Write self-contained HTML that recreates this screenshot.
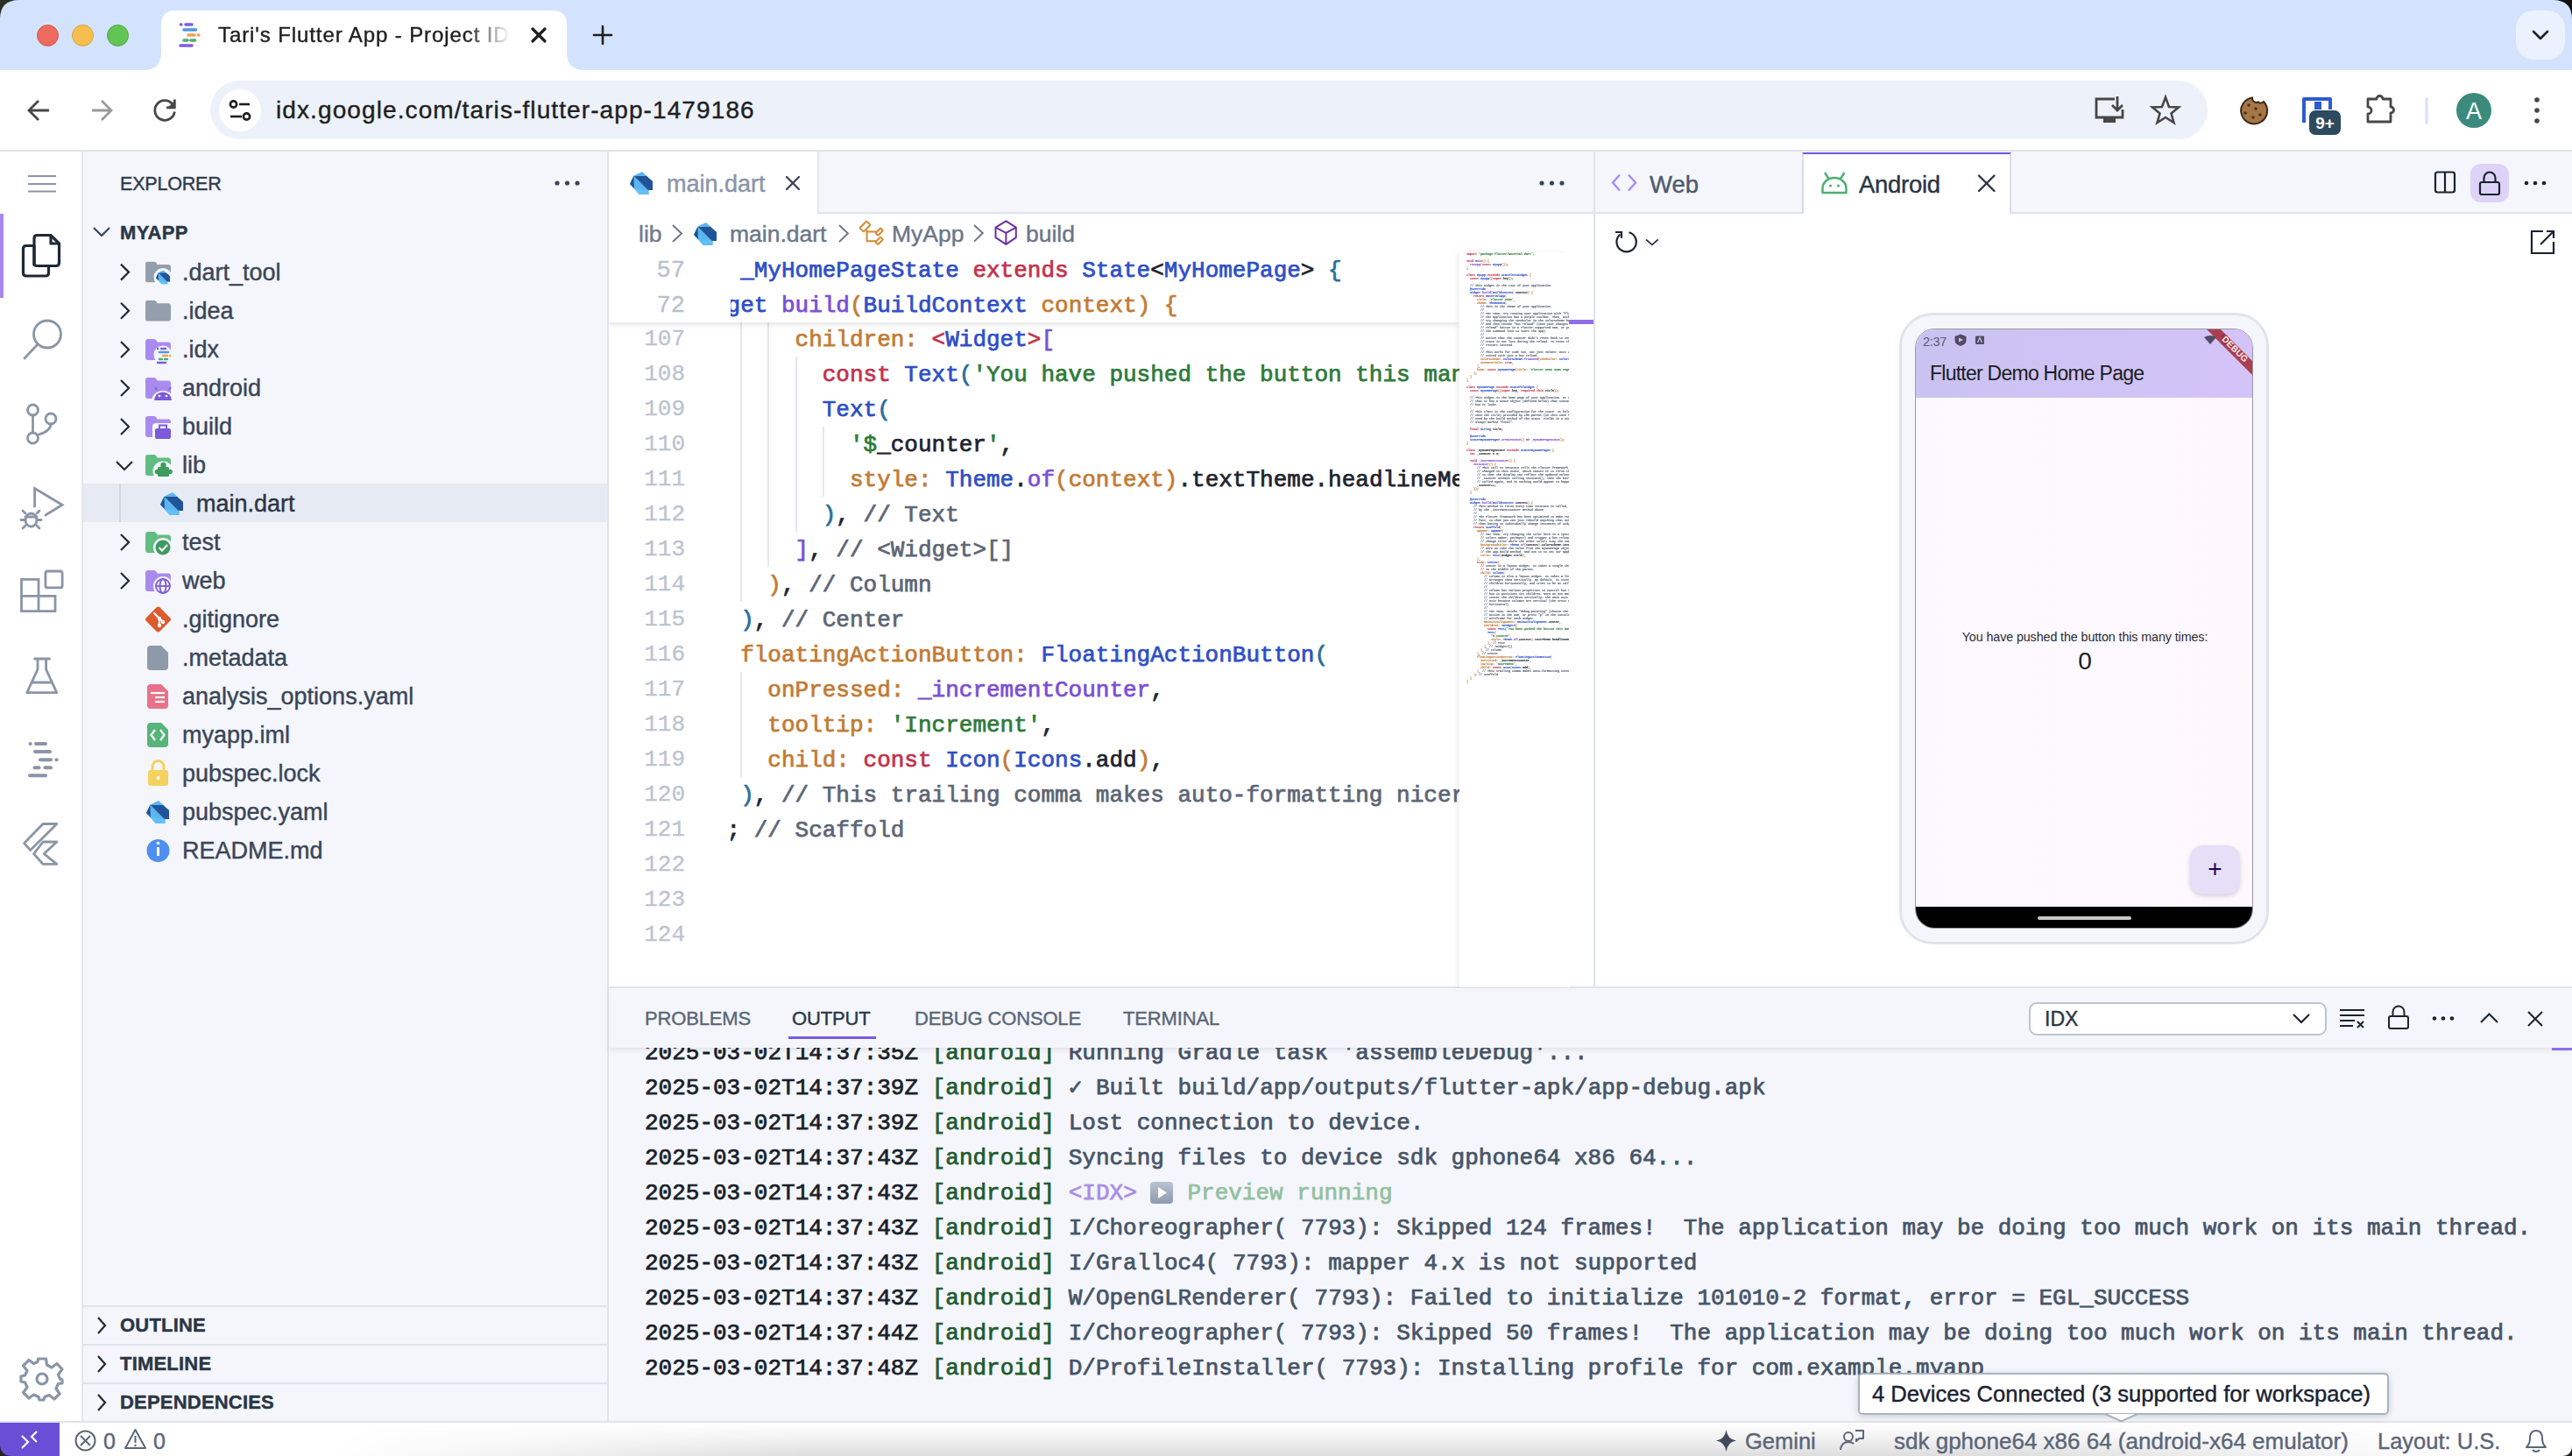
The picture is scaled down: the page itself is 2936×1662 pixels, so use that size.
<!DOCTYPE html>
<html><head><meta charset="utf-8">
<style>
*{box-sizing:border-box;margin:0;padding:0}
html,body{width:2936px;height:1662px;overflow:hidden;background:#fff;font-family:"Liberation Sans",sans-serif}
body{-webkit-text-stroke:0.4px currentColor}
.a{position:absolute}
.mono{font-family:"Liberation Mono",monospace}
svg{position:absolute;overflow:visible}
/* chrome */
#tabstrip{left:0;top:0;width:2936px;height:80px;background:#d3e3fd}
#toolbar{left:0;top:80px;width:2936px;height:93px;background:#fff;border-radius:20px 20px 0 0;border-bottom:2px solid #e1e3e6}
.tl{width:25px;height:25px;border-radius:50%;top:28px}
#ide{left:0;top:173px;width:2936px;height:1489px;background:#fff}
#actbar{left:0;top:173px;width:95px;height:1449px;background:#fff;border-right:2px solid #e2e6ec}
#sidebar{left:95px;top:173px;width:600px;height:1449px;background:#f4f6fb;border-right:2px solid #dfe3ea}
.row{position:absolute;left:95px;width:598px;height:44px;font-size:27px;color:#3a4557;line-height:44px;white-space:pre}
#edtabs{left:695px;top:173px;width:1124px;height:71px;background:#f4f6fb;border-bottom:2px solid #dfe3ea}
#editor{left:695px;top:244px;width:1124px;height:883px;background:#fff}
#rtabs{left:1819px;top:173px;width:1117px;height:71px;background:#f4f6fb;border-bottom:2px solid #dfe3ea;border-left:2px solid #dfe3ea}
#preview{left:1819px;top:244px;width:1117px;height:883px;background:#fff;border-left:2px solid #dfe3ea}
#panel{left:695px;top:1126px;width:2241px;height:496px;background:#f4f6fb;border-top:2px solid #dfe3ea}
#status{left:0;top:1622px;width:2936px;height:40px;background:#f4f6fb;border-top:2px solid #dfe3ea}
.code{position:absolute;left:0;height:40px;line-height:40px;font-size:26px;white-space:pre;font-family:"Liberation Mono",monospace;color:#1e2430;-webkit-text-stroke:0.75px currentColor}
.ln{position:absolute;width:60px;text-align:right;height:40px;line-height:40px;font-size:26px;font-family:"Liberation Mono",monospace;color:#bcc3ce;-webkit-text-stroke:0.3px currentColor}
.k{color:#c2334d}.t{color:#2e4fc7}.f{color:#7b4fd6}.p{color:#c27b35}.s{color:#2f7a3b}.c{color:#5d6675}.b1{color:#2a6d9c}.b2{color:#c27b35}.b3{color:#7b4fd6}
.con{position:absolute;left:736px;height:40px;line-height:40px;font-size:26px;white-space:pre;font-family:"Liberation Mono",monospace;color:#475467;-webkit-text-stroke:0.75px currentColor}
.ts{color:#1a1f29}.an{color:#1f5a2f}
</style></head><body>
<div id="tabstrip" class="a"></div>
<div id="toolbar" class="a"></div>
<div class="a tl" style="left:42px;background:#ed6a5e;border:1px solid #d5574b"></div>
<div class="a tl" style="left:82px;background:#f5bf4f;border:1px solid #d9a43c"></div>
<div class="a tl" style="left:122px;background:#61c554;border:1px solid #4da83f"></div>


<svg width="2936" height="173" style="left:0;top:0">
 <path d="M0 0 L22 0 Q0 0 0 22 Z" fill="#2b2f26"/>
 <path d="M2936 0 L2914 0 Q2936 0 2936 22 Z" fill="#111"/>
 <path d="M163 80 Q184 80 184 60 L184 28 Q184 12 200 12 L631 12 Q647 12 647 28 L647 60 Q647 80 668 80 Z" fill="#fff"/>
 <!-- favicon -->
 <g stroke-linecap="round" stroke-width="3.6">
  <line x1="206.5" y1="28" x2="206.8" y2="28" stroke="#7b5de0"/>
  <line x1="212" y1="28" x2="219" y2="28" stroke="#7b5de0"/>
  <line x1="210" y1="34" x2="223.5" y2="34" stroke="#4a97e6"/>
  <line x1="215" y1="40" x2="222" y2="40" stroke="#f0a04b"/>
  <line x1="226.5" y1="40" x2="226.8" y2="40" stroke="#f0a04b"/>
  <line x1="210" y1="46" x2="214" y2="46" stroke="#4caf6e"/>
  <line x1="218" y1="46" x2="222.5" y2="46" stroke="#4caf6e"/>
  <line x1="206" y1="52" x2="219" y2="52" stroke="#7b5de0"/>
 </g>
 <!-- tab close -->
 <g stroke="#1f1f1f" stroke-width="3.2" stroke-linecap="round">
  <line x1="608" y1="33" x2="622" y2="47"/><line x1="622" y1="33" x2="608" y2="47"/>
 </g>
 <!-- new tab + -->
 <g stroke="#1f1f1f" stroke-width="2.6" stroke-linecap="round">
  <line x1="678" y1="40" x2="698" y2="40"/><line x1="688" y1="30" x2="688" y2="50"/>
 </g>
 <!-- chevron btn -->
 <rect x="2872" y="12" width="56" height="56" rx="20" fill="#ebf1fd"/>
 <path d="M2892 36 L2900 44 L2908 36" fill="none" stroke="#1f1f1f" stroke-width="2.6" stroke-linecap="round" stroke-linejoin="round"/>
 <!-- toolbar -->
 <g fill="none" stroke="#474747" stroke-width="2.8" stroke-linecap="butt" stroke-linejoin="miter">
  <path d="M56 126 L33 126 M44 115 L33 126 L44 137"/>
 </g>
 <g fill="none" stroke="#9a9a9a" stroke-width="2.8">
  <path d="M105 126 L127 126 M116 115 L127 126 L116 137"/>
 </g>
 <g fill="none" stroke="#474747" stroke-width="2.8">
  <path d="M199.3 127.5 A11.3 11.3 0 1 1 197 119"/>
  <path d="M190 122.8 L199.3 122.8 L199.3 113.5" stroke-width="2.8"/>
  <path d="M192 122.8 L199.3 122.8 L199.3 115.5 Z" fill="#474747" stroke-width="1"/>
 </g>
 <rect x="240" y="92" width="2280" height="67" rx="33.5" fill="#edf2fa"/>
 <circle cx="274" cy="126" r="24" fill="#fff"/>
 <g fill="none" stroke="#1f1f1f" stroke-width="2.6">
  <circle cx="266.5" cy="119" r="3.6"/><line x1="273" y1="119" x2="285" y2="119"/>
  <circle cx="281.5" cy="133" r="3.6"/><line x1="263" y1="133" x2="276" y2="133"/>
 </g>
 <!-- install -->
 <g fill="none" stroke="#474747" stroke-width="2.8">
  <path d="M2414 113 L2393 113 L2393 134 L2423 134 L2423 125"/>
  <path d="M2417 110 L2417 126 M2411 120 L2417 126 L2423 120"/>
 </g>
 <rect x="2401" y="135" width="14" height="5" fill="#474747"/>
 <path d="M2472 111 L2476 122 L2487 122.5 L2478.5 129.5 L2481.5 140 L2472 134 L2462.5 140 L2465.5 129.5 L2457 122.5 L2468 122 Z" fill="none" stroke="#474747" stroke-width="2.6" stroke-linejoin="miter"/>
 <!-- cookie -->
 <path d="M2584 116 A15 15 0 1 1 2571 111.5 A5 5 0 0 0 2578 116.5 A4 4 0 0 0 2584 116 Z" fill="#a67645" stroke="#3d2a18" stroke-width="2"/>
 <g fill="#4a3220"><circle cx="2567" cy="120" r="1.8"/><circle cx="2575" cy="124" r="1.8"/><circle cx="2563" cy="129" r="1.8"/><circle cx="2572" cy="134" r="1.8"/><circle cx="2580" cy="131" r="1.8"/></g>
 <!-- ext badge -->
 <path d="M2630 140 L2630 113 L2660 113 L2660 125" fill="none" stroke="#2d5bd6" stroke-width="4" stroke-linejoin="round"/>
 <rect x="2642" y="116" width="8" height="9" fill="#2d5bd6"/>
 <rect x="2636" y="126" width="36" height="28" rx="7" fill="#2d4a5e"/>
 <text x="2654" y="147" font-family="Liberation Sans" font-weight="bold" font-size="19" fill="#fff" text-anchor="middle">9+</text>
 <!-- puzzle -->
 <path d="M2703 113 L2713 113 A3.5 3.5 0 0 1 2720 113 L2729 113 L2729 122 A3.5 3.5 0 0 1 2729 129 L2729 139 L2703 139 L2703 130 A4 4 0 0 0 2703 122 Z" fill="none" stroke="#474747" stroke-width="2.8" stroke-linejoin="round"/>
 <rect x="2768.5" y="111" width="3" height="31" rx="1.5" fill="#d3e3fd"/>
 <circle cx="2824" cy="126" r="20" fill="#3b8a7c"/>
 <text x="2824" y="136" font-family="Liberation Sans" font-size="27" fill="#fff" text-anchor="middle">A</text>
 <g fill="#474747"><circle cx="2896" cy="114" r="2.8"/><circle cx="2896" cy="126" r="2.8"/><circle cx="2896" cy="138" r="2.8"/></g>
</svg>
<div class="a" style="left:249px;top:22px;height:36px;line-height:36px;font-size:24px;color:#1f1f1f;white-space:pre;letter-spacing:0.9px;width:334px;overflow:hidden;-webkit-mask-image:linear-gradient(90deg,#000 85%,transparent)">Tari's Flutter App - Project IDX</div>
<div class="a" style="left:315px;top:106px;height:40px;line-height:40px;font-size:28px;color:#1f1f1f;white-space:pre;letter-spacing:1.1px">idx.google.com/taris-flutter-app-1479186</div>

<div id="actbar" class="a"></div>
<div id="sidebar" class="a"></div>

<svg width="0" height="0" style="position:absolute">
<defs>
 <symbol id="dart" viewBox="0 0 26 26">
  <polygon points="4.5,4.5 14,0 19.5,4.9 26,11 26,21 21.5,21 21.5,26 10.7,26 0,14" fill="#5db5ee"/>
  <polygon points="4.9,4.9 19,4.9 26,11 26,21 20.8,21" fill="#215398"/>
  <polygon points="4.5,4.5 0,14 4.9,19" fill="#215398"/>
  <polygon points="4.9,19 20.8,21 21.5,21 21.5,26 10.7,26" fill="#66c2f7" opacity=".8"/>
 </symbol>
 <symbol id="folder" viewBox="0 0 29 24">
  <path d="M0 3 Q0 0 3 0 L10 0 Q11.5 0 12.5 1.5 L13.5 3.5 L26 3.5 Q29 3.5 29 6.5 L29 21 Q29 24 26 24 L3 24 Q0 24 0 21 Z"/>
 </symbol>
</defs></svg>

<svg width="95" height="1450" style="left:0;top:173px">
 <g transform="translate(0,-173)">
 <g stroke="#8a95a6" stroke-width="2" fill="none">
  <line x1="32" y1="201" x2="64" y2="201"/><line x1="32" y1="210" x2="64" y2="210"/><line x1="32" y1="218.5" x2="64" y2="218.5"/>
 </g>
 <rect x="0" y="244" width="4" height="96" fill="#a687f2"/>
 <g stroke="#1f2937" stroke-width="3.2" fill="none" stroke-linejoin="round">
  <path d="M39 303 L39 272 Q39 268.5 42.5 268.5 L58 268.5 L67.5 278 L67.5 300 Q67.5 303.5 64 303.5 L55.5 303.5"/>
  <path d="M58 268.5 L58 278 L67.5 278"/>
  <path d="M39 280.5 L30 280.5 Q26.5 280.5 26.5 284 L26.5 311.5 Q26.5 315 30 315 L52 315 Q55.5 315 55.5 311.5 L55.5 303.5 L42 303.5 Q39 303.5 39 300.5 Z"/>
 </g>
 <g stroke="#8a95a6" stroke-width="2.8" fill="none" stroke-linecap="round">
  <circle cx="54" cy="381.5" r="15.5"/><line x1="43" y1="393" x2="28" y2="409"/>
  <circle cx="37.5" cy="468" r="6"/><circle cx="37.5" cy="500" r="6"/><circle cx="58" cy="478" r="6"/>
  <line x1="37.5" y1="474" x2="37.5" y2="494"/><path d="M58 484 Q58 492 44 496"/>
  <path d="M39.6 578 L39.6 557.5 L71 576.3 L52 588"/>
  <ellipse cx="35.5" cy="593.5" rx="6.5" ry="7.5"/><path d="M29 586 L26 583 M42 586 L45 583 M24 593.5 L29 593.5 M42 593.5 L47 593.5 M29 600 L26 603 M42 600 L45 603 M29 590 L42 590"/>
  <path d="M24.5 661.4 L44 661.4 L44 680.3 L63 680.3 L63 697.7 L24.5 697.7 Z M24.5 680.3 L44 680.3 L44 697.7"/>
  <rect x="51.9" y="652" width="19.2" height="18.9" rx="2.5"/>
  <path d="M39.6 752 L56.6 752 M43 752 L43 764 L30.8 790.7 L64.8 790.7 L52.6 764 L52.6 752 M36 779 L59.5 779" stroke-linejoin="round"/>
  <path d="M49 940.5 L64.8 940.5 L34.6 970.4 L27.6 962.5 Z" stroke-linejoin="round" stroke-width="2.8"/>
  <path d="M49 961 L64.8 961 L50.3 974.6 L64.8 986.3 L49 986.3 L38.6 974.6 Z" stroke-linejoin="round" stroke-width="2.8"/>
 </g>
 <g stroke="#8a95a6" stroke-width="4" stroke-linecap="round">
  <line x1="34.5" y1="849" x2="34.6" y2="849"/><line x1="41" y1="849" x2="52" y2="849"/>
  <line x1="40" y1="858" x2="57" y2="858"/>
  <line x1="46" y1="867.3" x2="58" y2="867.3"/><line x1="64.5" y1="867.3" x2="64.6" y2="867.3"/>
  <line x1="39.5" y1="876.2" x2="44.5" y2="876.2"/><line x1="51.5" y1="876.2" x2="58" y2="876.2"/>
  <line x1="34" y1="885.3" x2="52" y2="885.3"/>
 </g>
 <g transform="translate(48,1574)" fill="none" stroke="#8a95a6" stroke-width="3.2">
  <path d="M-4.5 -23 L4.5 -23 L5.5 -16 L11 -13 L17 -17.5 L23 -11 L18.5 -5 L20.5 0 L23 1 L23 5 L18.5 5.5 L16 11 L20 17 L14 23 L8 18.5 L3 20.5 L2 24 L-3 24 L-4 20.5 L-9.5 18 L-15 22 L-21.5 15.5 L-17 9.5 L-19.5 4 L-24 3 L-24 -3 L-19.5 -4 L-17 -9.5 L-21.5 -15 L-15 -21.5 L-9.5 -17.5 L-5 -19.5 Z" stroke-linejoin="round"/>
  <circle r="6"/>
 </g>
 </g>
</svg>
<div class="a" style="left:95px;top:552px;width:598px;height:44px;background:#e6eaf2"></div>
<div class="a" style="left:136px;top:552px;width:2px;height:44px;background:#d3d8e0"></div>
<div class="a" style="left:137px;top:194px;height:32px;line-height:32px;font-size:21.5px;color:#2f3a4c;letter-spacing:-0.2px">EXPLORER</div>
<div class="a" style="left:137px;top:250px;height:32px;line-height:32px;font-size:22px;font-weight:bold;color:#2b3545;letter-spacing:0.3px">MYAPP</div>
<div class="row" style="top:288.6px;padding-left:113px">.dart_tool</div>
<div class="row" style="top:332.8px;padding-left:113px">.idea</div>
<div class="row" style="top:377px;padding-left:113px">.idx</div>
<div class="row" style="top:421px;padding-left:113px">android</div>
<div class="row" style="top:465px;padding-left:113px">build</div>
<div class="row" style="top:509px;padding-left:113px">lib</div>
<div class="row" style="top:597px;padding-left:113px">test</div>
<div class="row" style="top:641px;padding-left:113px">web</div>
<div class="row" style="top:553px;padding-left:129px;color:#2b3545">main.dart</div>
<div class="row" style="top:685px;padding-left:113px">.gitignore</div>
<div class="row" style="top:729px;padding-left:113px">.metadata</div>
<div class="row" style="top:773px;padding-left:113px">analysis_options.yaml</div>
<div class="row" style="top:817px;padding-left:113px">myapp.iml</div>
<div class="row" style="top:861px;padding-left:113px">pubspec.lock</div>
<div class="row" style="top:905px;padding-left:113px">pubspec.yaml</div>
<div class="row" style="top:949px;padding-left:113px">README.md</div>
<div class="a" style="left:95px;top:1490px;width:598px;height:2px;background:#dfe3ea"></div>
<div class="a" style="left:95px;top:1534px;width:598px;height:2px;background:#dfe3ea"></div>
<div class="a" style="left:95px;top:1578px;width:598px;height:2px;background:#dfe3ea"></div>
<div class="a" style="left:137px;top:1497px;height:32px;line-height:32px;font-size:22px;font-weight:bold;color:#2b3545;letter-spacing:0.2px">OUTLINE</div>
<div class="a" style="left:137px;top:1541px;height:32px;line-height:32px;font-size:22px;font-weight:bold;color:#2b3545;letter-spacing:0.2px">TIMELINE</div>
<div class="a" style="left:137px;top:1585px;height:32px;line-height:32px;font-size:22px;font-weight:bold;color:#2b3545;letter-spacing:0.2px">DEPENDENCIES</div>
<svg width="700" height="1662" style="left:0;top:0">
<g fill="#3a4557"><circle cx="636" cy="209" r="2.6"/><circle cx="647.5" cy="209" r="2.6"/><circle cx="659" cy="209" r="2.6"/></g>
<path d="M107 260 L116 269 L125 260" fill="none" stroke="#3a4557" stroke-width="2.2"/>
<path d="M138 301.6 L147 310.6 L138 319.6" fill="none" stroke="#1f2937" stroke-width="2.2"/>
<use href="#folder" x="166" y="298.6" width="29" height="24" fill="#949eac"/>
<circle cx="186" cy="316.6" r="10.5" fill="#f4f6fb"/><use href="#dart" x="178" y="308.6" width="16" height="16"/>
<path d="M138 345.8 L147 354.8 L138 363.8" fill="none" stroke="#1f2937" stroke-width="2.2"/>
<use href="#folder" x="166" y="342.8" width="29" height="24" fill="#949eac"/>
<path d="M138 390 L147 399 L138 408" fill="none" stroke="#1f2937" stroke-width="2.2"/>
<use href="#folder" x="166" y="387" width="29" height="24" fill="#a98bf0"/>
<circle cx="186" cy="405" r="10.5" fill="#f4f6fb"/>
<g stroke-linecap="round" stroke-width="2.4"><line x1="180" y1="398" x2="180.2" y2="398" stroke="#7b5de0"/><line x1="184" y1="398" x2="189" y2="398" stroke="#7b5de0"/><line x1="182" y1="402" x2="192" y2="402" stroke="#4a97e6"/><line x1="186" y1="406" x2="191" y2="406" stroke="#f0a04b"/><line x1="194" y1="406" x2="194.2" y2="406" stroke="#f0a04b"/><line x1="182" y1="410" x2="185" y2="410" stroke="#4caf6e"/><line x1="188" y1="410" x2="191" y2="410" stroke="#4caf6e"/><line x1="180" y1="414" x2="189" y2="414" stroke="#7b5de0"/></g>
<path d="M138 434 L147 443 L138 452" fill="none" stroke="#1f2937" stroke-width="2.2"/>
<use href="#folder" x="166" y="431" width="29" height="24" fill="#a98bf0"/>
<path d="M173 458 A13 12 0 0 1 199 458 Z" fill="#f4f6fb"/><path d="M176 457 A10 9.5 0 0 1 196 457 Z" fill="#7c5ad9"/><g stroke="#7c5ad9" stroke-width="1.8"><line x1="179" y1="445" x2="177" y2="442"/><line x1="193" y1="445" x2="195" y2="442"/></g><circle cx="182" cy="452" r="1.3" fill="#f4f6fb"/><circle cx="190" cy="452" r="1.3" fill="#f4f6fb"/>
<path d="M138 478 L147 487 L138 496" fill="none" stroke="#1f2937" stroke-width="2.2"/>
<use href="#folder" x="166" y="475" width="29" height="24" fill="#a98bf0"/>
<rect x="174" y="483" width="24" height="20" rx="4" fill="#f4f6fb"/><rect x="177" y="489" width="18" height="12" rx="2" fill="#7c5ad9"/><path d="M182 489 L182 485.5 L190 485.5 L190 489" fill="none" stroke="#7c5ad9" stroke-width="2"/>
<path d="M133 527 L142 536 L151 527" fill="none" stroke="#1f2937" stroke-width="2.2"/>
<use href="#folder" x="166" y="519" width="29" height="24" fill="#62bd84"/>
<circle cx="186" cy="538" r="11.5" fill="#f4f6fb"/><g fill="#3e9a5f"><rect x="180" y="533" width="13" height="11" rx="1.5"/><circle cx="186.5" cy="531" r="3.2"/><circle cx="179.5" cy="538.5" r="2.8"/><circle cx="194" cy="538.5" r="2.8"/></g>
<path d="M138 610 L147 619 L138 628" fill="none" stroke="#1f2937" stroke-width="2.2"/>
<use href="#folder" x="166" y="607" width="29" height="24" fill="#62bd84"/>
<circle cx="186" cy="625" r="11" fill="#f4f6fb"/><circle cx="186" cy="625" r="8.5" fill="#3e9a5f"/><path d="M181.5 625 L185 628.5 L191 622" fill="none" stroke="#fff" stroke-width="2"/>
<path d="M138 654 L147 663 L138 672" fill="none" stroke="#1f2937" stroke-width="2.2"/>
<use href="#folder" x="166" y="651" width="29" height="24" fill="#a98bf0"/>
<circle cx="186" cy="669" r="11" fill="#f4f6fb"/><g fill="none" stroke="#7c5ad9" stroke-width="1.8"><circle cx="186" cy="669" r="8"/><ellipse cx="186" cy="669" rx="3.5" ry="8"/><line x1="178" y1="669" x2="194" y2="669"/></g>
<use href="#dart" x="183" y="562" width="26" height="26"/>
<g transform="translate(180.5,707) rotate(45)"><rect x="-11" y="-11" width="22" height="22" rx="3" fill="#dd5b2c"/></g><g stroke="#fff" stroke-width="2.2" fill="none" stroke-linecap="round"><line x1="176" y1="700" x2="182" y2="706"/><line x1="182" y1="706" x2="182" y2="714"/><line x1="182" y1="706" x2="186" y2="710"/></g><g fill="#fff"><circle cx="182" cy="706" r="2.2"/><circle cx="182" cy="714" r="2.2"/><circle cx="186" cy="710" r="2.2"/></g>
<path d="M168 741 Q168 737 172 737 L184 737 L192 745 L192 761 Q192 765 188 765 L172 765 Q168 765 168 761 Z" fill="#8e99a9"/>
<path d="M168 785 Q168 781 172 781 L184 781 L192 789 L192 805 Q192 809 188 809 L172 809 Q168 809 168 805 Z" fill="#e8728a"/>
<g stroke="#fff" stroke-width="2.2"><line x1="172" y1="791" x2="188" y2="791"/><line x1="177" y1="796" x2="188" y2="796"/><line x1="177" y1="801" x2="188" y2="801"/></g>
<path d="M168 829 Q168 825 172 825 L184 825 L192 833 L192 849 Q192 853 188 853 L172 853 Q168 853 168 849 Z" fill="#57b47b"/>
<path d="M177 833 L172.5 839 L177 845 M183 833 L187.5 839 L183 845" fill="none" stroke="#fff" stroke-width="2.2"/>
<path d="M174 879 L174 875 A6.5 6.5 0 0 1 187 875 L187 879" fill="none" stroke="#f5d25f" stroke-width="3"/><rect x="169" y="879" width="23" height="18" rx="3" fill="#f5d25f"/><circle cx="180.5" cy="888" r="2" fill="#fff"/>
<use href="#dart" x="167" y="914" width="26" height="26"/>
<circle cx="180.5" cy="971" r="13" fill="#4f8ff0"/><rect x="179" y="967" width="3" height="10" fill="#fff"/><circle cx="180.5" cy="962.5" r="1.8" fill="#fff"/>
<path d="M112 1504 L120 1513 L112 1522" fill="none" stroke="#1f2937" stroke-width="2.2"/>
<path d="M112 1548 L120 1557 L112 1566" fill="none" stroke="#1f2937" stroke-width="2.2"/>
<path d="M112 1592 L120 1601 L112 1610" fill="none" stroke="#1f2937" stroke-width="2.2"/>
</svg>
<div id="edtabs" class="a"></div>
<div id="editor" class="a"></div>
<div id="rtabs" class="a"></div>
<div id="preview" class="a"></div>
<div id="panel" class="a"></div>
<div id="status" class="a"></div>
<!--EDITOR-->

<div class="a" style="left:695px;top:173px;width:240px;height:72px;background:#fff;border-right:2px solid #e3e6ec"></div>
<svg width="2936" height="300" style="left:0;top:0">
 <use href="#dart" x="719" y="196" width="26" height="26"/>
 <g stroke="#3d4757" stroke-width="2.4" stroke-linecap="round"><line x1="898" y1="202" x2="912" y2="216"/><line x1="912" y1="202" x2="898" y2="216"/></g>
 <g fill="#3a4557"><circle cx="1760" cy="209" r="2.6"/><circle cx="1771.5" cy="209" r="2.6"/><circle cx="1783" cy="209" r="2.6"/></g>
 <g fill="none" stroke="#6b7689" stroke-width="1.9"><path d="M768 257 L778 266.5 L768 276"/><path d="M958 257 L968 266.5 L958 276"/><path d="M1112 257 L1121.8 266 L1112 275.6"/></g>
 <use href="#dart" x="792" y="254" width="26" height="26"/>
 <g fill="none" stroke="#d18a2f" stroke-width="2" stroke-linejoin="round">
  <rect x="982" y="255.4" width="11" height="6.2" rx="1" transform="rotate(-45 987.5 258.5)"/>
  <rect x="999.7" y="262.6" width="8" height="4" rx="0.8" transform="rotate(-45 1003.7 264.6)"/>
  <rect x="999.6" y="272.8" width="8" height="4" rx="0.8" transform="rotate(-45 1003.6 274.8)"/>
  <path d="M989.6 262.6 L989.6 275.2 L1000.5 275.2 M989.6 264.6 L1000.5 264.6"/>
 </g>
 <g fill="none" stroke="#6b2fa8" stroke-width="2" stroke-linejoin="round"><path d="M1148.4 252.3 L1159.8 259.7 L1159.8 271.1 L1148.4 278.9 L1136.5 271.1 L1136.5 259.7 Z"/><path d="M1136.5 259.7 L1148.4 265.8 L1159.8 259.7 M1148.4 265.8 L1148.4 278.9"/></g>
</svg>
<div class="a" style="left:761px;top:190px;height:40px;line-height:40px;font-size:27px;color:#8a95a8;white-space:pre">main.dart</div>
<div class="a" style="left:729px;top:247px;height:40px;line-height:40px;font-size:26.5px;color:#707b8d;white-space:pre">lib</div>
<div class="a" style="left:833px;top:247px;height:40px;line-height:40px;font-size:26.5px;color:#6b7689;white-space:pre">main.dart</div>
<div class="a" style="left:1018px;top:247px;height:40px;line-height:40px;font-size:26.5px;color:#6b7689;white-space:pre">MyApp</div>
<div class="a" style="left:1171px;top:247px;height:40px;line-height:40px;font-size:26.5px;color:#6b7689;white-space:pre">build</div>

<div class="a" style="left:695px;top:288px;width:971px;height:839px;overflow:hidden">
<div class="a" style="left:150.1px;top:79px;width:2px;height:320px;background:#e4e7ec"></div>
<div class="a" style="left:150.1px;top:479px;width:2px;height:120px;background:#e4e7ec"></div>
<div class="a" style="left:181.3px;top:79px;width:2px;height:280px;background:#e4e7ec"></div>
<div class="a" style="left:212.5px;top:119px;width:2px;height:200px;background:#e4e7ec"></div>
<div class="a" style="left:243.7px;top:199px;width:2px;height:80px;background:#e4e7ec"></div>
<div class="ln" style="left:27px;top:79px">107</div>
<div class="a" style="left:139px;top:79px;width:832px;height:40px;overflow:hidden"><div class="code" style="left:-82.5px;top:1px">          <span class="p">children:</span> <span class="k">&lt;</span><span class="t">Widget</span><span class="k">&gt;</span><span class="b3">[</span></div></div>
<div class="ln" style="left:27px;top:119px">108</div>
<div class="a" style="left:139px;top:119px;width:832px;height:40px;overflow:hidden"><div class="code" style="left:-82.5px;top:1px">            <span class="k">const</span> <span class="t">Text</span><span class="b1">(</span><span class="s">&#x27;You have pushed the button this many times:&#x27;</span><span class="b1">)</span>,</div></div>
<div class="ln" style="left:27px;top:159px">109</div>
<div class="a" style="left:139px;top:159px;width:832px;height:40px;overflow:hidden"><div class="code" style="left:-82.5px;top:1px">            <span class="t">Text</span><span class="b1">(</span></div></div>
<div class="ln" style="left:27px;top:199px">110</div>
<div class="a" style="left:139px;top:199px;width:832px;height:40px;overflow:hidden"><div class="code" style="left:-82.5px;top:1px">              <span class="s">&#x27;$</span>_counter<span class="s">&#x27;</span>,</div></div>
<div class="ln" style="left:27px;top:239px">111</div>
<div class="a" style="left:139px;top:239px;width:832px;height:40px;overflow:hidden"><div class="code" style="left:-82.5px;top:1px">              <span class="p">style:</span> <span class="t">Theme</span>.<span class="f">of</span><span class="b2">(</span><span class="p">context</span><span class="b2">)</span>.textTheme.headlineMedium,</div></div>
<div class="ln" style="left:27px;top:279px">112</div>
<div class="a" style="left:139px;top:279px;width:832px;height:40px;overflow:hidden"><div class="code" style="left:-82.5px;top:1px">            <span class="b1">)</span>, <span class="c">// Text</span></div></div>
<div class="ln" style="left:27px;top:319px">113</div>
<div class="a" style="left:139px;top:319px;width:832px;height:40px;overflow:hidden"><div class="code" style="left:-82.5px;top:1px">          <span class="b3">]</span>, <span class="c">// &lt;Widget&gt;[]</span></div></div>
<div class="ln" style="left:27px;top:359px">114</div>
<div class="a" style="left:139px;top:359px;width:832px;height:40px;overflow:hidden"><div class="code" style="left:-82.5px;top:1px">        <span class="b2">)</span>, <span class="c">// Column</span></div></div>
<div class="ln" style="left:27px;top:399px">115</div>
<div class="a" style="left:139px;top:399px;width:832px;height:40px;overflow:hidden"><div class="code" style="left:-82.5px;top:1px">      <span class="b1">)</span>, <span class="c">// Center</span></div></div>
<div class="ln" style="left:27px;top:439px">116</div>
<div class="a" style="left:139px;top:439px;width:832px;height:40px;overflow:hidden"><div class="code" style="left:-82.5px;top:1px">      <span class="p">floatingActionButton:</span> <span class="t">FloatingActionButton</span><span class="b1">(</span></div></div>
<div class="ln" style="left:27px;top:479px">117</div>
<div class="a" style="left:139px;top:479px;width:832px;height:40px;overflow:hidden"><div class="code" style="left:-82.5px;top:1px">        <span class="p">onPressed:</span> <span class="f">_incrementCounter</span>,</div></div>
<div class="ln" style="left:27px;top:519px">118</div>
<div class="a" style="left:139px;top:519px;width:832px;height:40px;overflow:hidden"><div class="code" style="left:-82.5px;top:1px">        <span class="p">tooltip:</span> <span class="s">&#x27;Increment&#x27;</span>,</div></div>
<div class="ln" style="left:27px;top:559px">119</div>
<div class="a" style="left:139px;top:559px;width:832px;height:40px;overflow:hidden"><div class="code" style="left:-82.5px;top:1px">        <span class="p">child:</span> <span class="k">const</span> <span class="t">Icon</span><span class="b2">(</span><span class="t">Icons</span>.add<span class="b2">)</span>,</div></div>
<div class="ln" style="left:27px;top:599px">120</div>
<div class="a" style="left:139px;top:599px;width:832px;height:40px;overflow:hidden"><div class="code" style="left:-82.5px;top:1px">      <span class="b1">)</span>, <span class="c">// This trailing comma makes auto-formatting nicer for build methods.</span></div></div>
<div class="ln" style="left:27px;top:639px">121</div>
<div class="a" style="left:139px;top:639px;width:832px;height:40px;overflow:hidden"><div class="code" style="left:-82.5px;top:1px">    <span class="b3">)</span>; <span class="c">// Scaffold</span></div></div>
<div class="ln" style="left:27px;top:679px">122</div>
<div class="a" style="left:139px;top:679px;width:832px;height:40px;overflow:hidden"><div class="code" style="left:-82.5px;top:1px">  <span class="b2">}</span></div></div>
<div class="ln" style="left:27px;top:719px">123</div>
<div class="a" style="left:139px;top:719px;width:832px;height:40px;overflow:hidden"><div class="code" style="left:-82.5px;top:1px"><span class="b1">}</span></div></div>
<div class="ln" style="left:27px;top:759px">124</div>
<div class="a" style="left:139px;top:759px;width:832px;height:40px;overflow:hidden"><div class="code" style="left:-82.5px;top:1px"></div></div>
<div class="a" style="left:0;top:0;width:971px;height:80px;background:#fff;box-shadow:0 3px 6px rgba(0,0,0,0.10)"></div>
<div class="ln" style="left:27px;top:1px;color:#b9c0cc;font-size:27px">57</div>
<div class="a" style="left:139px;top:0px;width:832px;height:40px;overflow:hidden"><div class="code" style="left:-82.5px;top:1px"><span class="k">class </span><span class="t">_MyHomePageState</span> <span class="k">extends</span> <span class="t">State</span>&lt;<span class="t">MyHomePage</span>&gt; <span class="b1">{</span></div></div>
<div class="ln" style="left:27px;top:41px;color:#b9c0cc;font-size:27px">72</div>
<div class="a" style="left:139px;top:40px;width:832px;height:40px;overflow:hidden"><div class="code" style="left:-82.5px;top:1px">  <span class="t">Widget</span> <span class="f">build</span><span class="b2">(</span><span class="t">BuildContext</span> <span class="p">context</span><span class="b2">)</span> <span class="b2">{</span></div></div>
</div>
<div class="a" style="left:1666px;top:288px;width:125px;height:839px;background:#fff;box-shadow:-3px 0 5px rgba(0,0,0,0.06);overflow:hidden">
<div class="a" style="left:8px;top:0px;width:1300px;transform-origin:0 0;transform:scale(0.1282,0.1)">
<div class="code" style="position:relative;font-weight:bold"><span class="k">import</span> <span class="s">&#x27;package:flutter/material.dart&#x27;</span>;</div>
<div class="code" style="position:relative;font-weight:bold">&nbsp;</div>
<div class="code" style="position:relative;font-weight:bold"><span class="k">void</span> <span class="f">main</span><span class="b2">(</span><span class="b2">)</span> <span class="b2">{</span></div>
<div class="code" style="position:relative;font-weight:bold">  <span class="f">runApp</span><span class="b2">(</span><span class="k">const</span> <span class="t">MyApp</span><span class="b2">(</span><span class="b2">)</span><span class="b2">)</span>;</div>
<div class="code" style="position:relative;font-weight:bold"><span class="b2">}</span></div>
<div class="code" style="position:relative;font-weight:bold">&nbsp;</div>
<div class="code" style="position:relative;font-weight:bold"><span class="k">class</span> <span class="t">MyApp</span> <span class="k">extends</span> <span class="t">StatelessWidget</span> <span class="b2">{</span></div>
<div class="code" style="position:relative;font-weight:bold">  <span class="k">const</span> <span class="t">MyApp</span><span class="b2">(</span><span class="b2">{</span><span class="k">super</span>.key<span class="b2">}</span><span class="b2">)</span>;</div>
<div class="code" style="position:relative;font-weight:bold">&nbsp;</div>
<div class="code" style="position:relative;font-weight:bold">  <span class="c">// This widget is the root of your application.</span></div>
<div class="code" style="position:relative;font-weight:bold">  <span class="t">@override</span></div>
<div class="code" style="position:relative;font-weight:bold">  <span class="t">Widget</span> <span class="f">build</span><span class="b2">(</span><span class="t">BuildContext</span> context<span class="b2">)</span> <span class="b2">{</span></div>
<div class="code" style="position:relative;font-weight:bold">    <span class="k">return</span> <span class="t">MaterialApp</span><span class="b2">(</span></div>
<div class="code" style="position:relative;font-weight:bold">      <span class="p">title</span>: <span class="s">&#x27;Flutter Demo&#x27;</span>,</div>
<div class="code" style="position:relative;font-weight:bold">      <span class="p">theme</span>: <span class="t">ThemeData</span><span class="b2">(</span></div>
<div class="code" style="position:relative;font-weight:bold">        <span class="c">// This is the theme of your application.</span></div>
<div class="code" style="position:relative;font-weight:bold">        <span class="c">//</span></div>
<div class="code" style="position:relative;font-weight:bold">        <span class="c">// TRY THIS: Try running your application with &quot;flutter run&quot;. You&#x27;ll see</span></div>
<div class="code" style="position:relative;font-weight:bold">        <span class="c">// the application has a purple toolbar. Then, without quitting the app,</span></div>
<div class="code" style="position:relative;font-weight:bold">        <span class="c">// try changing the seedColor in the colorScheme below to Colors.green</span></div>
<div class="code" style="position:relative;font-weight:bold">        <span class="c">// and then invoke &quot;hot reload&quot; (save your changes or press the &quot;hot</span></div>
<div class="code" style="position:relative;font-weight:bold">        <span class="c">// reload&quot; button in a Flutter-supported IDE, or press &quot;r&quot; if you used</span></div>
<div class="code" style="position:relative;font-weight:bold">        <span class="c">// the command line to start the app).</span></div>
<div class="code" style="position:relative;font-weight:bold">        <span class="c">//</span></div>
<div class="code" style="position:relative;font-weight:bold">        <span class="c">// Notice that the counter didn&#x27;t reset back to zero; the application</span></div>
<div class="code" style="position:relative;font-weight:bold">        <span class="c">// state is not lost during the reload. To reset the state, use hot</span></div>
<div class="code" style="position:relative;font-weight:bold">        <span class="c">// restart instead.</span></div>
<div class="code" style="position:relative;font-weight:bold">        <span class="c">//</span></div>
<div class="code" style="position:relative;font-weight:bold">        <span class="c">// This works for code too, not just values: Most code changes can be</span></div>
<div class="code" style="position:relative;font-weight:bold">        <span class="c">// tested with just a hot reload.</span></div>
<div class="code" style="position:relative;font-weight:bold">        <span class="p">colorScheme</span>: <span class="t">ColorScheme</span>.<span class="f">fromSeed</span><span class="b2">(</span><span class="p">seedColor</span>: <span class="t">Colors</span>.deepPurple<span class="b2">)</span>,</div>
<div class="code" style="position:relative;font-weight:bold">        <span class="p">useMaterial3</span>: <span class="k">true</span>,</div>
<div class="code" style="position:relative;font-weight:bold">      <span class="b2">)</span>,</div>
<div class="code" style="position:relative;font-weight:bold">      <span class="p">home</span>: <span class="k">const</span> <span class="t">MyHomePage</span><span class="b2">(</span><span class="p">title</span>: <span class="s">&#x27;Flutter Demo Home Page&#x27;</span><span class="b2">)</span>,</div>
<div class="code" style="position:relative;font-weight:bold">    <span class="b2">)</span>;</div>
<div class="code" style="position:relative;font-weight:bold">  <span class="b2">}</span></div>
<div class="code" style="position:relative;font-weight:bold"><span class="b2">}</span></div>
<div class="code" style="position:relative;font-weight:bold">&nbsp;</div>
<div class="code" style="position:relative;font-weight:bold"><span class="k">class</span> <span class="t">MyHomePage</span> <span class="k">extends</span> <span class="t">StatefulWidget</span> <span class="b2">{</span></div>
<div class="code" style="position:relative;font-weight:bold">  <span class="k">const</span> <span class="t">MyHomePage</span><span class="b2">(</span><span class="b2">{</span><span class="k">super</span>.key, <span class="k">required</span> <span class="k">this</span>.title<span class="b2">}</span><span class="b2">)</span>;</div>
<div class="code" style="position:relative;font-weight:bold">&nbsp;</div>
<div class="code" style="position:relative;font-weight:bold">  <span class="c">// This widget is the home page of your application. It is stateful, meaning</span></div>
<div class="code" style="position:relative;font-weight:bold">  <span class="c">// that it has a State object (defined below) that contains fields that affect</span></div>
<div class="code" style="position:relative;font-weight:bold">  <span class="c">// how it looks.</span></div>
<div class="code" style="position:relative;font-weight:bold">&nbsp;</div>
<div class="code" style="position:relative;font-weight:bold">  <span class="c">// This class is the configuration for the state. It holds the values (in this</span></div>
<div class="code" style="position:relative;font-weight:bold">  <span class="c">// case the title) provided by the parent (in this case the App widget) and</span></div>
<div class="code" style="position:relative;font-weight:bold">  <span class="c">// used by the build method of the State. Fields in a Widget subclass are</span></div>
<div class="code" style="position:relative;font-weight:bold">  <span class="c">// always marked &quot;final&quot;.</span></div>
<div class="code" style="position:relative;font-weight:bold">&nbsp;</div>
<div class="code" style="position:relative;font-weight:bold">  <span class="k">final</span> <span class="t">String</span> title;</div>
<div class="code" style="position:relative;font-weight:bold">&nbsp;</div>
<div class="code" style="position:relative;font-weight:bold">  <span class="t">@override</span></div>
<div class="code" style="position:relative;font-weight:bold">  <span class="t">State</span>&lt;<span class="t">MyHomePage</span>&gt; <span class="f">createState</span><span class="b2">(</span><span class="b2">)</span> =&gt; <span class="f">_MyHomePageState</span><span class="b2">(</span><span class="b2">)</span>;</div>
<div class="code" style="position:relative;font-weight:bold"><span class="b2">}</span></div>
<div class="code" style="position:relative;font-weight:bold">&nbsp;</div>
<div class="code" style="position:relative;font-weight:bold"><span class="k">class</span> _MyHomePageState <span class="k">extends</span> <span class="t">State</span>&lt;<span class="t">MyHomePage</span>&gt; <span class="b2">{</span></div>
<div class="code" style="position:relative;font-weight:bold">  <span class="k">int</span> _counter = 0;</div>
<div class="code" style="position:relative;font-weight:bold">&nbsp;</div>
<div class="code" style="position:relative;font-weight:bold">  <span class="k">void</span> <span class="f">_incrementCounter</span><span class="b2">(</span><span class="b2">)</span> <span class="b2">{</span></div>
<div class="code" style="position:relative;font-weight:bold">    <span class="f">setState</span><span class="b2">(</span><span class="b2">(</span><span class="b2">)</span> <span class="b2">{</span></div>
<div class="code" style="position:relative;font-weight:bold">      <span class="c">// This call to setState tells the Flutter framework that something has</span></div>
<div class="code" style="position:relative;font-weight:bold">      <span class="c">// changed in this State, which causes it to rerun the build method below</span></div>
<div class="code" style="position:relative;font-weight:bold">      <span class="c">// so that the display can reflect the updated values. If we changed</span></div>
<div class="code" style="position:relative;font-weight:bold">      <span class="c">// _counter without calling setState(), then the build method would not be</span></div>
<div class="code" style="position:relative;font-weight:bold">      <span class="c">// called again, and so nothing would appear to happen.</span></div>
<div class="code" style="position:relative;font-weight:bold">      _counter++;</div>
<div class="code" style="position:relative;font-weight:bold">    <span class="b2">}</span><span class="b2">)</span>;</div>
<div class="code" style="position:relative;font-weight:bold">  <span class="b2">}</span></div>
<div class="code" style="position:relative;font-weight:bold">&nbsp;</div>
<div class="code" style="position:relative;font-weight:bold">  <span class="t">@override</span></div>
<div class="code" style="position:relative;font-weight:bold">  <span class="t">Widget</span> <span class="f">build</span><span class="b2">(</span><span class="t">BuildContext</span> context<span class="b2">)</span> <span class="b2">{</span></div>
<div class="code" style="position:relative;font-weight:bold">    <span class="c">// This method is rerun every time setState is called, for instance as done</span></div>
<div class="code" style="position:relative;font-weight:bold">    <span class="c">// by the _incrementCounter method above.</span></div>
<div class="code" style="position:relative;font-weight:bold">    <span class="c">//</span></div>
<div class="code" style="position:relative;font-weight:bold">    <span class="c">// The Flutter framework has been optimized to make rerunning build methods</span></div>
<div class="code" style="position:relative;font-weight:bold">    <span class="c">// fast, so that you can just rebuild anything that needs updating rather</span></div>
<div class="code" style="position:relative;font-weight:bold">    <span class="c">// than having to individually change instances of widgets.</span></div>
<div class="code" style="position:relative;font-weight:bold">    <span class="k">return</span> <span class="t">Scaffold</span><span class="b2">(</span></div>
<div class="code" style="position:relative;font-weight:bold">      <span class="p">appBar</span>: <span class="t">AppBar</span><span class="b2">(</span></div>
<div class="code" style="position:relative;font-weight:bold">        <span class="c">// TRY THIS: Try changing the color here to a specific color (to</span></div>
<div class="code" style="position:relative;font-weight:bold">        <span class="c">// Colors.amber, perhaps?) and trigger a hot reload to see the AppBar</span></div>
<div class="code" style="position:relative;font-weight:bold">        <span class="c">// change color while the other colors stay the same.</span></div>
<div class="code" style="position:relative;font-weight:bold">        <span class="p">backgroundColor</span>: <span class="t">Theme</span>.<span class="f">of</span><span class="b2">(</span>context<span class="b2">)</span>.colorScheme.inversePrimary,</div>
<div class="code" style="position:relative;font-weight:bold">        <span class="c">// Here we take the value from the MyHomePage object that was created by</span></div>
<div class="code" style="position:relative;font-weight:bold">        <span class="c">// the App.build method, and use it to set our appbar title.</span></div>
<div class="code" style="position:relative;font-weight:bold">        <span class="p">title</span>: <span class="t">Text</span><span class="b2">(</span>widget.title<span class="b2">)</span>,</div>
<div class="code" style="position:relative;font-weight:bold">      <span class="b2">)</span>,</div>
<div class="code" style="position:relative;font-weight:bold">      <span class="p">body</span>: <span class="t">Center</span><span class="b2">(</span></div>
<div class="code" style="position:relative;font-weight:bold">        <span class="c">// Center is a layout widget. It takes a single child and positions it</span></div>
<div class="code" style="position:relative;font-weight:bold">        <span class="c">// in the middle of the parent.</span></div>
<div class="code" style="position:relative;font-weight:bold">        <span class="p">child</span>: <span class="t">Column</span><span class="b2">(</span></div>
<div class="code" style="position:relative;font-weight:bold">          <span class="c">// Column is also a layout widget. It takes a list of children and</span></div>
<div class="code" style="position:relative;font-weight:bold">          <span class="c">// arranges them vertically. By default, it sizes itself to fit its</span></div>
<div class="code" style="position:relative;font-weight:bold">          <span class="c">// children horizontally, and tries to be as tall as its parent.</span></div>
<div class="code" style="position:relative;font-weight:bold">          <span class="c">//</span></div>
<div class="code" style="position:relative;font-weight:bold">          <span class="c">// Column has various properties to control how it sizes itself and</span></div>
<div class="code" style="position:relative;font-weight:bold">          <span class="c">// how it positions its children. Here we use mainAxisAlignment to</span></div>
<div class="code" style="position:relative;font-weight:bold">          <span class="c">// center the children vertically; the main axis here is the vertical</span></div>
<div class="code" style="position:relative;font-weight:bold">          <span class="c">// axis because Columns are vertical (the cross axis would be</span></div>
<div class="code" style="position:relative;font-weight:bold">          <span class="c">// horizontal).</span></div>
<div class="code" style="position:relative;font-weight:bold">          <span class="c">//</span></div>
<div class="code" style="position:relative;font-weight:bold">          <span class="c">// TRY THIS: Invoke &quot;debug painting&quot; (choose the &quot;Toggle Debug Paint&quot;</span></div>
<div class="code" style="position:relative;font-weight:bold">          <span class="c">// action in the IDE, or press &quot;p&quot; in the console), to see the</span></div>
<div class="code" style="position:relative;font-weight:bold">          <span class="c">// wireframe for each widget.</span></div>
<div class="code" style="position:relative;font-weight:bold">          <span class="p">mainAxisAlignment</span>: <span class="t">MainAxisAlignment</span>.center,</div>
<div class="code" style="position:relative;font-weight:bold">          <span class="p">children</span>: &lt;<span class="t">Widget</span>&gt;<span class="b2">[</span></div>
<div class="code" style="position:relative;font-weight:bold">            <span class="k">const</span> <span class="t">Text</span><span class="b1">(</span><span class="s">&#x27;You have pushed the button this many times:&#x27;</span><span class="b1">)</span>,</div>
<div class="code" style="position:relative;font-weight:bold">            <span class="t">Text</span><span class="b2">(</span></div>
<div class="code" style="position:relative;font-weight:bold">              <span class="s">&#x27;$_counter&#x27;</span>,</div>
<div class="code" style="position:relative;font-weight:bold">              <span class="p">style</span>: <span class="t">Theme</span>.<span class="f">of</span><span class="b2">(</span>context<span class="b2">)</span>.textTheme.headlineMedium,</div>
<div class="code" style="position:relative;font-weight:bold">            <span class="b2">)</span>, <span class="c">// Text</span></div>
<div class="code" style="position:relative;font-weight:bold">          <span class="b2">]</span>, <span class="c">// &lt;Widget&gt;[]</span></div>
<div class="code" style="position:relative;font-weight:bold">        <span class="b2">)</span>, <span class="c">// Column</span></div>
<div class="code" style="position:relative;font-weight:bold">      <span class="b2">)</span>, <span class="c">// Center</span></div>
<div class="code" style="position:relative;font-weight:bold">      <span class="p">floatingActionButton</span>: <span class="t">FloatingActionButton</span><span class="b2">(</span></div>
<div class="code" style="position:relative;font-weight:bold">        <span class="p">onPressed</span>: _incrementCounter,</div>
<div class="code" style="position:relative;font-weight:bold">        <span class="p">tooltip</span>: <span class="s">&#x27;Increment&#x27;</span>,</div>
<div class="code" style="position:relative;font-weight:bold">        <span class="p">child</span>: <span class="k">const</span> <span class="t">Icon</span><span class="b2">(</span><span class="t">Icons</span>.add<span class="b2">)</span>,</div>
<div class="code" style="position:relative;font-weight:bold">      <span class="b2">)</span>, <span class="c">// This trailing comma makes auto-formatting nicer for build methods.</span></div>
<div class="code" style="position:relative;font-weight:bold">    <span class="b2">)</span>; <span class="c">// Scaffold</span></div>
<div class="code" style="position:relative;font-weight:bold">  <span class="b2">}</span></div>
<div class="code" style="position:relative;font-weight:bold"><span class="b2">}</span></div>
<div class="code" style="position:relative;font-weight:bold">&nbsp;</div>
</div></div>
<div class="a" style="left:1791px;top:365px;width:28px;height:5px;background:#8f6ee8"></div>
<!--/EDITOR-->
<!--RIGHT-->
<div class="a" style="left:2057px;top:174px;width:239px;height:70px;background:#fff;border-left:2px solid #d8dde5;border-right:2px solid #d8dde5;border-top:2px solid #7555dc"></div>
<svg width="2936" height="1130" style="left:0;top:0">
 <path d="M1849 199.5 L1841 208.5 L1849 217.5 M1859 199.5 L1867 208.5 L1859 217.5" fill="none" stroke="#a78bfa" stroke-width="2.4"/>
 <g fill="none" stroke="#4cae72" stroke-width="2.4">
  <path d="M2080.5 220 L2080.5 215 A13.5 12 0 0 1 2107.5 215 L2107.5 220 Z" stroke-linejoin="round"/>
  <line x1="2083" y1="197" x2="2087.5" y2="204"/><line x1="2105.5" y1="197" x2="2101" y2="204"/>
 </g>
 <circle cx="2089.5" cy="212" r="1.6" fill="#4cae72"/><circle cx="2098.5" cy="212" r="1.6" fill="#4cae72"/>
 <g stroke="#2b3545" stroke-width="2.4" stroke-linecap="round"><line x1="2259" y1="200.5" x2="2276.5" y2="218"/><line x1="2276.5" y1="200.5" x2="2259" y2="218"/></g>
 <g fill="none" stroke="#1a2230" stroke-width="2.2">
  <rect x="2780" y="196.5" width="22" height="23" rx="2.5"/><line x1="2791" y1="196.5" x2="2791" y2="219.5"/>
 </g>
 <rect x="2820" y="187" width="44" height="44" rx="12" fill="#ddd3f8"/>
 <g fill="none" stroke="#1a2230" stroke-width="2.2">
  <rect x="2831" y="208" width="22" height="14" rx="2"/><path d="M2835.5 208 L2835.5 203 A6.5 6.5 0 0 1 2848.5 203 L2848.5 208"/>
 </g>
 <g fill="#1a2230"><circle cx="2884" cy="209" r="2.3"/><circle cx="2894" cy="209" r="2.3"/><circle cx="2904" cy="209" r="2.3"/></g>
 <g fill="none" stroke="#1a2230" stroke-width="2.2">
  <path d="M1859.5 265.3 A11.2 11.2 0 1 1 1849.5 267.5"/><path d="M1844 265 L1851 265 L1851 272" stroke-width="2.1"/>
  <path d="M1879 273.3 L1885.9 279.5 L1892.7 273.3" stroke-width="1.6"/>
  <path d="M2903 264 L2890 264 L2890 289 L2915 289 L2915 276 M2907 264 L2915 264 L2915 272 M2915 264 L2900 279"/>
 </g>
</svg>
<div class="a" style="left:1883px;top:191px;height:40px;line-height:40px;font-size:27.5px;color:#4f5a6c;white-space:pre">Web</div>
<div class="a" style="left:2122px;top:191px;height:40px;line-height:40px;font-size:27.5px;color:#2b3545;white-space:pre;letter-spacing:-0.3px">Android</div>
<!-- phone -->
<div class="a" style="left:2168px;top:357px;width:422px;height:721px;border-radius:38px;background:#f4f6fb;border:3px solid #dfe3ea"></div>
<div class="a" style="left:2186px;top:375px;width:386px;height:685px;border-radius:22px;overflow:hidden;background:linear-gradient(90deg,#fbf9ff,#fef8fd);border:1px solid #9a9aa0;-webkit-text-stroke:0">
 <div class="a" style="left:0;top:0;width:386px;height:78px;background:linear-gradient(100deg,#c9c3f1,#d4c3f8)"></div>
 <div class="a" style="left:8px;top:2px;height:24px;line-height:24px;font-size:14.5px;color:#5c5878;letter-spacing:-0.3px">2:37</div>
 <svg width="386" height="80" style="left:0;top:0">
  <path d="M51 5.5 L57.5 8 L57.5 12.5 Q57.5 17 51 19 Q44.5 17 44.5 12.5 L44.5 8 Z" fill="#514c63"/>
  <path d="M49 9.5 L54 12 L49 14.5 Z" fill="#c9c3f1"/>
  <rect x="68" y="7.5" width="10" height="9.5" rx="1" fill="#514c63"/><path d="M70.5 15 L73 9.5 L75.5 15" stroke="#c9c3f1" stroke-width="1.2" fill="none"/>
  <path d="M329 9 Q336 5 343 9 L336 17 Z" fill="#514c63"/>
  <rect x="349" y="6.5" width="7" height="11" rx="1.5" fill="#514c63"/>
  <path d="M330 -2 L346 -2 L390 42 L390 58 Z" fill="#a3323e" opacity=".9"/>
  <text x="0" y="0" transform="translate(362,25) rotate(45)" font-family="Liberation Sans" font-weight="bold" font-size="10" fill="#fbeaea" text-anchor="middle" letter-spacing="0.3">DEBUG</text>
 </svg>
 <div class="a" style="left:16px;top:33px;height:34px;line-height:34px;font-size:23px;color:#1d1b20;white-space:pre;letter-spacing:-0.75px">Flutter Demo Home Page</div>
 <div class="a" style="left:0;top:339px;width:386px;text-align:center;height:24px;line-height:24px;font-size:14.3px;color:#2b2930;white-space:pre;letter-spacing:-0.1px">You have pushed the button this many times:</div>
 <div class="a" style="left:0;top:361px;width:386px;text-align:center;height:36px;line-height:36px;font-size:28px;color:#1d1b20">0</div>
 <div class="a" style="left:313px;top:589px;width:57px;height:56px;border-radius:15px;background:#e5dff8;box-shadow:0 2px 5px rgba(0,0,0,0.16)"></div>
 <div class="a" style="left:313px;top:589px;width:57px;height:56px;text-align:center;line-height:54px;font-size:28px;color:#21005d">+</div>
 <div class="a" style="left:0;top:659px;width:386px;height:26px;background:#000"></div>
 <div class="a" style="left:139px;top:670px;width:107px;height:4px;border-radius:2px;background:#c9c9c9"></div>
</div>

<!--/RIGHT-->
<!--PANEL-->
<div class="a" style="left:695px;top:1196px;width:2241px;height:426px;overflow:hidden">
<div class="con" style="left:41px;top:-14px"><span class="ts">2025-03-02T14:37:35Z</span> <span class="an">[android]</span> Running Gradle task &#x27;assembleDebug&#x27;...</div>
<div class="con" style="left:41px;top:26px"><span class="ts">2025-03-02T14:37:39Z</span> <span class="an">[android]</span> ✓ Built build/app/outputs/flutter-apk/app-debug.apk</div>
<div class="con" style="left:41px;top:66px"><span class="ts">2025-03-02T14:37:39Z</span> <span class="an">[android]</span> Lost connection to device.</div>
<div class="con" style="left:41px;top:106px"><span class="ts">2025-03-02T14:37:43Z</span> <span class="an">[android]</span> Syncing files to device sdk gphone64 x86 64...</div>
<div class="con" style="left:41px;top:146px"><span class="ts">2025-03-02T14:37:43Z</span> <span class="an">[android]</span> <span style="color:#a98de6">&lt;IDX&gt;</span> <span style="display:inline-block;width:26.5px"></span> <span style="color:#93c09f">Preview running</span></div>
<div class="con" style="left:41px;top:186px"><span class="ts">2025-03-02T14:37:43Z</span> <span class="an">[android]</span> I/Choreographer( 7793): Skipped 124 frames!  The application may be doing too much work on its main thread.</div>
<div class="con" style="left:41px;top:226px"><span class="ts">2025-03-02T14:37:43Z</span> <span class="an">[android]</span> I/Gralloc4( 7793): mapper 4.x is not supported</div>
<div class="con" style="left:41px;top:266px"><span class="ts">2025-03-02T14:37:43Z</span> <span class="an">[android]</span> W/OpenGLRenderer( 7793): Failed to initialize 101010-2 format, error = EGL_SUCCESS</div>
<div class="con" style="left:41px;top:306px"><span class="ts">2025-03-02T14:37:44Z</span> <span class="an">[android]</span> I/Choreographer( 7793): Skipped 50 frames!  The application may be doing too much work on its main thread.</div>
<div class="con" style="left:41px;top:346px"><span class="ts">2025-03-02T14:37:48Z</span> <span class="an">[android]</span> D/ProfileInstaller( 7793): Installing profile for com.example.myapp</div>
</div>
<div class="a" style="left:1313px;top:1349px;width:26px;height:25px;border-radius:4px;background:linear-gradient(#b9c4d2,#8d9aae)"></div>
<svg width="30" height="30" style="left:1313px;top:1349px"><path d="M9 6 L19 12.5 L9 19 Z" fill="#fff"/></svg>
<div class="a" style="left:695px;top:1128px;width:2241px;height:68px;background:#f4f6fb;box-shadow:0 3px 5px rgba(0,0,0,0.07)"></div>
<div class="a" style="left:736px;top:1147px;height:32px;line-height:32px;font-size:22px;color:#5b6678;white-space:pre;letter-spacing:-0.15px">PROBLEMS</div>
<div class="a" style="left:904px;top:1147px;height:32px;line-height:32px;font-size:22px;color:#2b3545;white-space:pre;letter-spacing:-0.15px">OUTPUT</div>
<div class="a" style="left:1044px;top:1147px;height:32px;line-height:32px;font-size:22px;color:#5b6678;white-space:pre;letter-spacing:-0.15px">DEBUG CONSOLE</div>
<div class="a" style="left:1282px;top:1147px;height:32px;line-height:32px;font-size:22px;color:#5b6678;white-space:pre;letter-spacing:-0.15px">TERMINAL</div>
<div class="a" style="left:900px;top:1183px;width:100px;height:3px;background:#7a5bdc"></div>
<div class="a" style="left:2316px;top:1144px;width:340px;height:38px;border:2px solid #bdc4cf;border-radius:9px;background:#fff"></div>
<div class="a" style="left:2334px;top:1147px;height:33px;line-height:33px;font-size:23px;color:#2b3545">IDX</div>
<svg width="2936" height="1662" style="left:0;top:0">
 <path d="M2618 1158 L2627 1167 L2636 1158" fill="none" stroke="#1a2230" stroke-width="2.2"/>
 <g stroke="#1a2230" stroke-width="2" fill="none">
  <line x1="2671" y1="1153" x2="2699" y2="1153"/><line x1="2671" y1="1159" x2="2699" y2="1159"/><line x1="2671" y1="1165" x2="2688" y2="1165"/><line x1="2671" y1="1171" x2="2686" y2="1171"/>
  <path d="M2691 1166 L2698 1173 M2698 1166 L2691 1173"/>
  <rect x="2727" y="1160" width="22" height="14" rx="2"/><path d="M2731.5 1160 L2731.5 1155 A6.5 6.5 0 0 1 2744.5 1155 L2744.5 1160"/>
  <path d="M2832 1167 L2841.5 1157.5 L2851 1167"/>
  <path d="M2886 1155 L2902 1171 M2902 1155 L2886 1171"/>
 </g>
 <g fill="#1a2230"><circle cx="2779" cy="1162.5" r="2.3"/><circle cx="2789" cy="1162.5" r="2.3"/><circle cx="2799" cy="1162.5" r="2.3"/></g>
</svg>
<div class="a" style="left:2913px;top:1196px;width:23px;height:3px;background:#8f6ee8"></div>
<div class="a" style="left:0;top:1622px;width:2936px;height:40px;background:#fff;border-top:2px solid #dfe3ea"></div>
<div class="a" style="left:380px;top:1624px;width:2450px;height:38px;background:linear-gradient(to bottom,rgba(0,0,0,0) 0%,rgba(0,0,0,0.05) 45%,rgba(0,0,0,0.13) 100%);-webkit-mask-image:linear-gradient(90deg,transparent 0%,#000 22%,#000 78%,transparent 100%)"></div>
<div class="a" style="left:0;top:1624px;width:68px;height:38px;background:#6a4fd6"></div>
<svg width="2936" height="1662" style="left:0;top:0">
 <path d="M0 1648 L0 1662 L14 1662 Q0 1662 0 1648 Z" fill="#222"/>
 <path d="M2936 1650 L2936 1662 L2924 1662 Q2936 1662 2936 1650 Z" fill="#222"/>
 <g stroke="#fff" stroke-width="2.2" fill="none"><path d="M25 1639 L32 1646 L25 1653"/><path d="M42 1634 L36 1640 L42 1646"/></g>
 <g stroke="#5b6678" stroke-width="2" fill="none">
  <circle cx="97.5" cy="1644.5" r="11"/><path d="M92 1639 L103 1650 M103 1639 L92 1650"/>
  <path d="M154.5 1632 L166 1653 L143 1653 Z" stroke-linejoin="round"/>
 </g>
 <rect x="153.5" y="1639" width="2" height="8" fill="#5b6678"/><circle cx="154.5" cy="1650" r="1.2" fill="#5b6678"/>
 <path d="M1970.5 1632 Q1972 1643 1982 1644.5 Q1972 1646 1970.5 1657 Q1969 1646 1959 1644.5 Q1969 1643 1970.5 1632 Z" fill="#3f4a5c"/>
 <g stroke="#5b6678" stroke-width="2" fill="none">
  <circle cx="2110" cy="1640" r="5"/><path d="M2101 1655 Q2102 1646 2110 1646 Q2114 1646 2116 1648"/>
  <path d="M2118 1633 L2127 1633 L2127 1642 L2122 1642 L2119 1645 L2119 1642" stroke-linejoin="round"/>
  <path d="M2884 1652 L2906 1652 Q2902 1648 2902 1642 Q2902 1633 2895 1633 Q2888 1633 2888 1642 Q2888 1648 2884 1652 Z M2891 1655 Q2895 1659 2899 1655" stroke-linejoin="round"/>
 </g>
</svg>
<div class="a" style="left:118px;top:1627px;height:36px;line-height:36px;font-size:25px;color:#5b6678">0</div>
<div class="a" style="left:175px;top:1627px;height:36px;line-height:36px;font-size:25px;color:#5b6678">0</div>
<div class="a" style="left:1992px;top:1627px;height:36px;line-height:36px;font-size:25.5px;color:#5b6678;white-space:pre">Gemini</div>
<div class="a" style="left:2162px;top:1627px;height:36px;line-height:36px;font-size:26px;color:#5b6678;white-space:pre">sdk gphone64 x86 64 (android-x64 emulator)</div>
<div class="a" style="left:2714px;top:1627px;height:36px;line-height:36px;font-size:25.5px;color:#5b6678;white-space:pre">Layout: U.S.</div>
<div class="a" style="left:2121px;top:1567px;width:606px;height:48px;background:#fff;border:2px solid #a9b2c1;border-radius:5px;box-shadow:0 2px 8px rgba(0,0,0,0.16)"></div>
<svg width="40" height="20" style="left:2402px;top:1612px"><path d="M3 2 L19.5 9.5 L36 2 Z" fill="#fff"/><path d="M2 2.5 L19.5 10.5 L37 2.5" fill="none" stroke="#a9b2c1" stroke-width="2"/></svg>
<div class="a" style="left:2137px;top:1573px;height:36px;line-height:36px;font-size:25.6px;color:#1a2230;white-space:pre">4 Devices Connected (3 supported for workspace)</div>
<!--/PANEL-->
</body></html>
